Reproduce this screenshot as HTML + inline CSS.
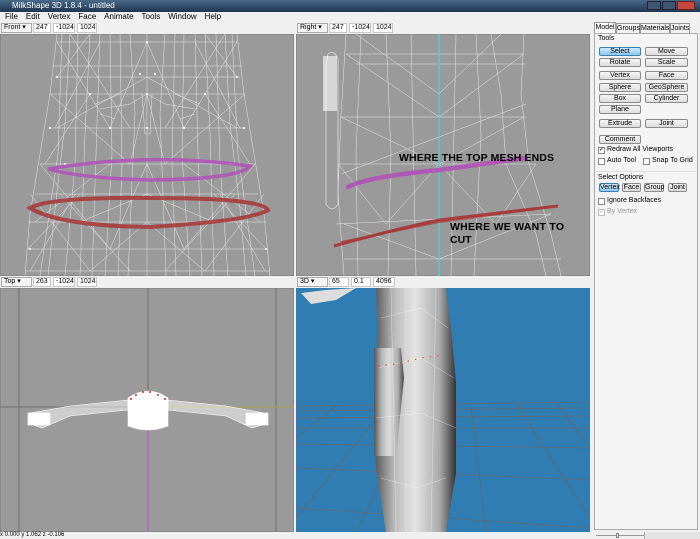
<!DOCTYPE html>
<html><head><meta charset="utf-8"><style>
*{margin:0;padding:0;box-sizing:border-box}
body{width:700px;height:539px;overflow:hidden;background:#f0f0f0;font-family:"Liberation Sans",sans-serif;font-size:8px;color:#000;position:relative}
.a{position:absolute}
.title{left:0;top:0;width:700px;height:12px;background:linear-gradient(#4a6a8a,#1d3550);color:#fff;font-size:8px;line-height:12px;padding-left:12px}
.menu{top:12px;left:0;width:590px;height:10px;line-height:10px;font-size:8px}
.menu span{margin-left:5px;margin-right:3px}
.tb{height:12px;background:#f0f0f0;font-size:7px}
.in{position:absolute;top:1px;height:10px;background:#fff;border:1px solid #c8c8c8;line-height:8px;padding-left:2px;font-size:7px}
.dd{position:absolute;top:1px;height:10px;background:#f4f4f4;border:1px solid #aaa;line-height:8px;padding-left:2px;font-size:7px}
.btn{position:absolute;height:9px;border:1px solid #8a8a8a;border-radius:2px;background:linear-gradient(#f6f6f6,#dcdcdc);font-size:7px;line-height:7px;text-align:center}
.sel{background:linear-gradient(#cfe9fb,#8cc6ee);border-color:#3c7fb1}
.tab{position:absolute;top:23px;height:11px;border:1px solid #999;border-bottom:none;background:#f0f0f0;font-size:7px;line-height:10px;text-align:center}
.cb{position:absolute;width:7px;height:7px;border:1px solid #888;background:#fff}
.lbl{position:absolute;font-size:7px;line-height:8px}
</style></head><body>
<div class="a title">MilkShape 3D 1.8.4 - untitled
<div class="a" style="right:5px;top:1px;width:48px;height:9px;display:flex;gap:1px"><div style="flex:1;background:#3c5570;border:1px solid #223"></div><div style="flex:1;background:#3c5570;border:1px solid #223"></div><div style="flex:1.4;background:#c8463a;border:1px solid #622"></div></div></div>
<div class="a menu"><span>File</span><span>Edit</span><span>Vertex</span><span>Face</span><span>Animate</span><span>Tools</span><span>Window</span><span>Help</span></div>

<div class="a tb" style="left:0;top:22px;width:294px"><div class="dd" style="left:1px;width:31px">Front ▾</div><div class="in" style="left:33px;width:18px">247</div><div class="in" style="left:53px;width:22px">-1024</div><div class="in" style="left:77px;width:20px">1024</div></div>
<div class="a tb" style="left:296px;top:22px;width:294px"><div class="dd" style="left:1px;width:31px">Right ▾</div><div class="in" style="left:33px;width:18px">247</div><div class="in" style="left:53px;width:22px">-1024</div><div class="in" style="left:77px;width:20px">1024</div></div>
<div class="a tb" style="left:0;top:276px;width:294px"><div class="dd" style="left:1px;width:31px">Top ▾</div><div class="in" style="left:33px;width:18px">263</div><div class="in" style="left:53px;width:22px">-1024</div><div class="in" style="left:77px;width:20px">1024</div></div>
<div class="a tb" style="left:296px;top:276px;width:294px"><div class="dd" style="left:1px;width:31px">3D ▾</div><div class="in" style="left:33px;width:20px">65</div><div class="in" style="left:55px;width:20px">0.1</div><div class="in" style="left:77px;width:22px">4096</div></div>

<svg class="a" style="left:0;top:34px" width="294" height="242" viewBox="0 0 294 242">
<rect width="294" height="242" fill="#9a9a9a" stroke="#777"/>
<g stroke="#f4f4f4" stroke-width=".5" fill="none" opacity=".85">
<path d="M57 0 L50 60 L40 120 L30 180 L25 242 M237 0 L244 60 L254 120 L264 180 L270 242"/>
<path d="M70 0 L65 90 L55 175 L48 242 M90 0 L85 100 L80 242 M110 0 L112 120 L105 242 M130 0 L135 80 L128 242 M147 0 L147 242 M165 0 L160 80 L166 242 M184 0 L182 120 L190 242 M205 0 L210 100 L214 242 M225 0 L230 90 L240 175 L246 242"/>
<path d="M62 0 L58 120 L40 242 M78 0 L75 130 L65 242 M100 0 L96 120 L92 242 M120 0 L122 130 L118 242 M175 0 L172 130 L176 242 M195 0 L198 120 L202 242 M216 0 L220 130 L228 242 M232 0 L238 120 L255 242"/>
<path d="M57 8 L237 8 M55 43 L240 43 M50 60 L245 60 M48 94 L246 94 M40 130 L255 130 M35 160 L258 160 M28 188 L266 188 M28 215 L268 215 M25 237 L270 237 M52 32 L242 32"/>
<path d="M57 8 L110 94 L147 8 L184 94 L237 8 M50 60 L130 130 L147 60 L165 130 L245 60 M40 130 L110 215 L147 130 L184 215 L255 130 M30 160 L90 237 L147 188 L205 237 L264 160 M57 43 L90 0 M237 43 L205 0 M57 94 L147 43 L237 94 M35 188 L110 130 M260 188 L184 130 M28 215 L80 160 M266 215 L214 160"/>
<path d="M70 0 L130 94 M225 0 L165 94 M55 94 L100 8 M240 94 L195 8 M45 130 L90 60 M250 130 L205 60 M30 237 L75 160 M265 237 L220 160 M60 160 L130 237 M235 160 L165 237 M80 188 L147 160 L214 188"/>
<path d="M100 75 L130 70 L147 60 L165 70 L195 75 M100 80 L115 85 M195 80 L180 85 M142 60 L145 100 L150 100 L152 60 M95 70 L120 60 M200 70 L175 60"/>
</g>
<g fill="#fff"><circle cx="147" cy="8" r="1"/><circle cx="147" cy="60" r="1"/><circle cx="147" cy="94" r="1"/><circle cx="110" cy="94" r="1"/><circle cx="184" cy="94" r="1"/><circle cx="90" cy="60" r="1"/><circle cx="205" cy="60" r="1"/><circle cx="65" cy="130" r="1"/><circle cx="230" cy="130" r="1"/><circle cx="140" cy="40" r="1"/><circle cx="155" cy="40" r="1"/><circle cx="57" cy="43" r="1"/><circle cx="237" cy="43" r="1"/><circle cx="50" cy="94" r="1"/><circle cx="244" cy="94" r="1"/><circle cx="30" cy="215" r="1"/><circle cx="266" cy="215" r="1"/></g>
<path d="M48 135 Q150 118 250 132 Q240 145 150 146 Q80 144 48 135Z" fill="none" stroke="#b050b8" stroke-width="3.5" opacity=".85"/>
<path d="M30 174 Q50 163 150 164 Q262 164 268 176 Q250 187 150 193 Q60 192 30 174Z" fill="none" stroke="#a83434" stroke-width="4" opacity=".85"/>
</svg>

<svg class="a" style="left:296px;top:34px" width="294" height="242" viewBox="0 0 294 242">
<rect width="294" height="242" fill="#9a9a9a" stroke="#777"/>
<g stroke="#f4f4f4" stroke-width=".5" fill="none" opacity=".85">
<path d="M50 0 L45 80 L42 160 L48 242 M65 0 L60 120 L62 242 M90 0 L95 120 L92 242 M180 0 L185 100 L178 242 M195 0 L205 60 L210 130 L240 200 L250 242 M228 0 L225 60 L233 130 L255 200 L265 242 M115 0 L120 242 M160 0 L155 242"/>
<path d="M50 20 L228 20 M60 30 L230 30 M45 83 L230 83 M42 130 L240 130 M40 190 L255 180 M48 225 L265 225"/>
<path d="M50 20 L143 83 L228 20 M45 83 L143 130 L228 83 M42 130 L90 190 L143 130 L200 190 L240 130 M48 190 L143 225 L255 180 M60 0 L143 60 L205 0 M45 140 L230 70"/>
<path d="M32 20 Q38 15 42 25 L42 170 Q36 180 30 170 L30 30Z" stroke-width=".7"/>
</g>
<g fill="#fff"><rect x="27" y="22" width="14" height="55" opacity=".6"/></g>
<line x1="143" y1="0" x2="143" y2="242" stroke="#3fd8e0" stroke-width="1.3"/>
<path d="M52 153 Q70 143 143 136 L230 124" stroke="#b050b8" stroke-width="4.5" fill="none" stroke-linecap="round" opacity=".9"/>
<path d="M38 212 Q100 195 143 186 L262 172" stroke="#a83434" stroke-width="3" fill="none" opacity=".9"/>
<path d="M45 208 L143 188 L240 175" stroke="#a83434" stroke-width="2" fill="none" opacity=".7"/>
<text x="103" y="127" font-family="Liberation Sans" font-weight="bold" font-size="10.5" fill="#000" textLength="155">WHERE THE TOP MESH ENDS</text>
<text x="154" y="196" font-family="Liberation Sans" font-weight="bold" font-size="10.5" fill="#000" textLength="114">WHERE WE WANT TO</text>
<text x="154" y="209" font-family="Liberation Sans" font-weight="bold" font-size="10.5" fill="#000">CUT</text>
</svg>

<svg class="a" style="left:0;top:288px" width="294" height="244" viewBox="0 0 294 244">
<rect width="294" height="244" fill="#9a9a9a" stroke="#777"/>
<g stroke="#6e6e6e" stroke-width="1"><line x1="19" y1="0" x2="19" y2="244"/><line x1="148" y1="0" x2="148" y2="244"/><line x1="276" y1="0" x2="276" y2="244"/><line x1="0" y1="119" x2="294" y2="119"/></g>
<line x1="168" y1="119" x2="294" y2="119" stroke="#e0d830" stroke-width=".6"/>
<line x1="148" y1="130" x2="148" y2="244" stroke="#c050c0" stroke-width="1.2"/>
<g fill="#fff" stroke="#fff" stroke-width=".6">
<path d="M128 110 Q148 96 168 110 L168 138 Q148 146 128 138Z"/>
<path d="M128 112 L70 118 L30 125 L28 135 L42 140 L70 128 L128 122Z" fill-opacity=".5"/>
<path d="M168 112 L226 118 L264 125 L268 135 L252 140 L226 128 L168 122Z" fill-opacity=".5"/>
<rect x="28" y="125" width="22" height="12"/><rect x="246" y="125" width="22" height="12"/>
</g>
<g fill="#e02020"><circle cx="143" cy="104" r="1"/><circle cx="150" cy="104" r="1"/><circle cx="136" cy="107" r="1"/><circle cx="158" cy="107" r="1"/><circle cx="131" cy="111" r="1"/><circle cx="165" cy="111" r="1"/></g>
</svg>

<svg class="a" style="left:296px;top:288px" width="294" height="244" viewBox="0 0 294 244">
<defs><linearGradient id="g" x1="0" x2="1"><stop offset="0" stop-color="#555"/><stop offset=".25" stop-color="#bbb"/><stop offset=".5" stop-color="#e4e4e4"/><stop offset=".8" stop-color="#aaa"/><stop offset="1" stop-color="#333"/></linearGradient></defs>
<rect width="294" height="244" fill="#2f7db2"/>
<g stroke="#5f6a73" stroke-width=".8" fill="none">
<line x1="0" y1="118" x2="294" y2="114"/>
<line x1="0" y1="123" x2="294" y2="120"/>
<line x1="0" y1="130" x2="294" y2="128"/>
<line x1="0" y1="140" x2="294" y2="140"/>
<line x1="0" y1="156" x2="294" y2="160"/>
<line x1="0" y1="180" x2="294" y2="192"/>
<line x1="0" y1="220" x2="294" y2="240"/>
<line x1="0" y1="150" x2="40" y2="118"/>
<line x1="0" y1="230" x2="90" y2="118"/>
<line x1="60" y1="244" x2="120" y2="118"/>
<line x1="190" y1="244" x2="175" y2="118"/>
<line x1="294" y1="230" x2="220" y2="116"/>
<line x1="294" y1="160" x2="260" y2="115"/>
</g>
<path d="M80 0 L150 0 L155 40 L160 95 L160 185 L150 244 L90 244 L80 180 L78 120 L82 40Z" fill="url(#g)"/>
<path d="M78 60 L105 60 L108 90 L100 168 L78 168Z" fill="url(#g)" opacity=".9"/>
<path d="M5 5 L30 2 L60 0 L40 12 L15 16Z" fill="#ddd"/>
<g stroke="#fff" stroke-width=".4" fill="none" opacity=".7"><path d="M85 30 L125 20 L152 40 M82 80 L125 70 L158 90 M80 130 L125 125 L160 140 M85 190 L120 200 L150 190 M110 0 L110 244 M95 0 L100 244 M140 0 L135 244"/></g>
<path d="M82 78 L100 76 L125 70 L148 67" stroke="#e03030" stroke-width="1" fill="none" stroke-dasharray="1.5 6"/>
</svg>

<div class="tab" style="left:594px;width:22px;top:22px;height:12px;background:#fff">Model</div>
<div class="tab" style="left:616px;width:24px">Groups</div>
<div class="tab" style="left:640px;width:30px">Materials</div>
<div class="tab" style="left:670px;width:20px">Joints</div>
<div class="a" style="left:594px;top:33px;width:104px;height:497px;border:1px solid #aaa;background:#f4f4f4"></div>
<div class="lbl" style="left:598px;top:35px">Tools</div>
<div class="btn sel" style="left:599px;top:47px;width:42px">Select</div><div class="btn" style="left:645px;top:47px;width:43px">Move</div>
<div class="btn" style="left:599px;top:58px;width:42px">Rotate</div><div class="btn" style="left:645px;top:58px;width:43px">Scale</div>
<div class="btn" style="left:599px;top:71px;width:42px">Vertex</div><div class="btn" style="left:645px;top:71px;width:43px">Face</div>
<div class="btn" style="left:599px;top:83px;width:42px">Sphere</div><div class="btn" style="left:645px;top:83px;width:43px">GeoSphere</div>
<div class="btn" style="left:599px;top:94px;width:42px">Box</div><div class="btn" style="left:645px;top:94px;width:43px">Cylinder</div>
<div class="btn" style="left:599px;top:105px;width:42px">Plane</div>
<div class="btn" style="left:599px;top:119px;width:42px">Extrude</div><div class="btn" style="left:645px;top:119px;width:43px">Joint</div>
<div class="btn" style="left:599px;top:135px;width:42px">Comment</div>
<div class="cb" style="left:598px;top:147px;font-size:6px;line-height:5px">✓</div><div class="lbl" style="left:607px;top:146px">Redraw All Viewports</div>
<div class="cb" style="left:598px;top:158px"></div><div class="lbl" style="left:607px;top:157px">Auto Tool</div>
<div class="cb" style="left:643px;top:158px"></div><div class="lbl" style="left:652px;top:157px">Snap To Grid</div>
<div class="a" style="left:596px;top:171px;width:100px;border-top:1px solid #ddd"></div>
<div class="lbl" style="left:598px;top:174px">Select Options</div>
<div class="btn sel" style="left:599px;top:183px;width:20px">Vertex</div>
<div class="btn" style="left:622px;top:183px;width:19px">Face</div>
<div class="btn" style="left:644px;top:183px;width:20px">Group</div>
<div class="btn" style="left:668px;top:183px;width:19px">Joint</div>
<div class="cb" style="left:598px;top:198px"></div><div class="lbl" style="left:607px;top:197px">Ignore Backfaces</div>
<div class="cb" style="left:598px;top:209px;border-color:#bbb;color:#aaa;font-size:6px;line-height:5px">✓</div><div class="lbl" style="left:607px;top:208px;color:#999">By Vertex</div>

<div class="a" style="left:0;top:532px;font-size:6px;line-height:7px">x 0.000 y 1.062 z -0.106</div>
<div class="a" style="left:596px;top:535px;width:50px;border-top:1px solid #999"></div>
<div class="a" style="left:616px;top:533px;width:3px;height:5px;background:#ddd;border:1px solid #888"></div>
<div class="a" style="left:644px;top:532px;width:56px;height:7px;background:#e4e4e4;border-left:1px solid #aaa"></div>
</body></html>
